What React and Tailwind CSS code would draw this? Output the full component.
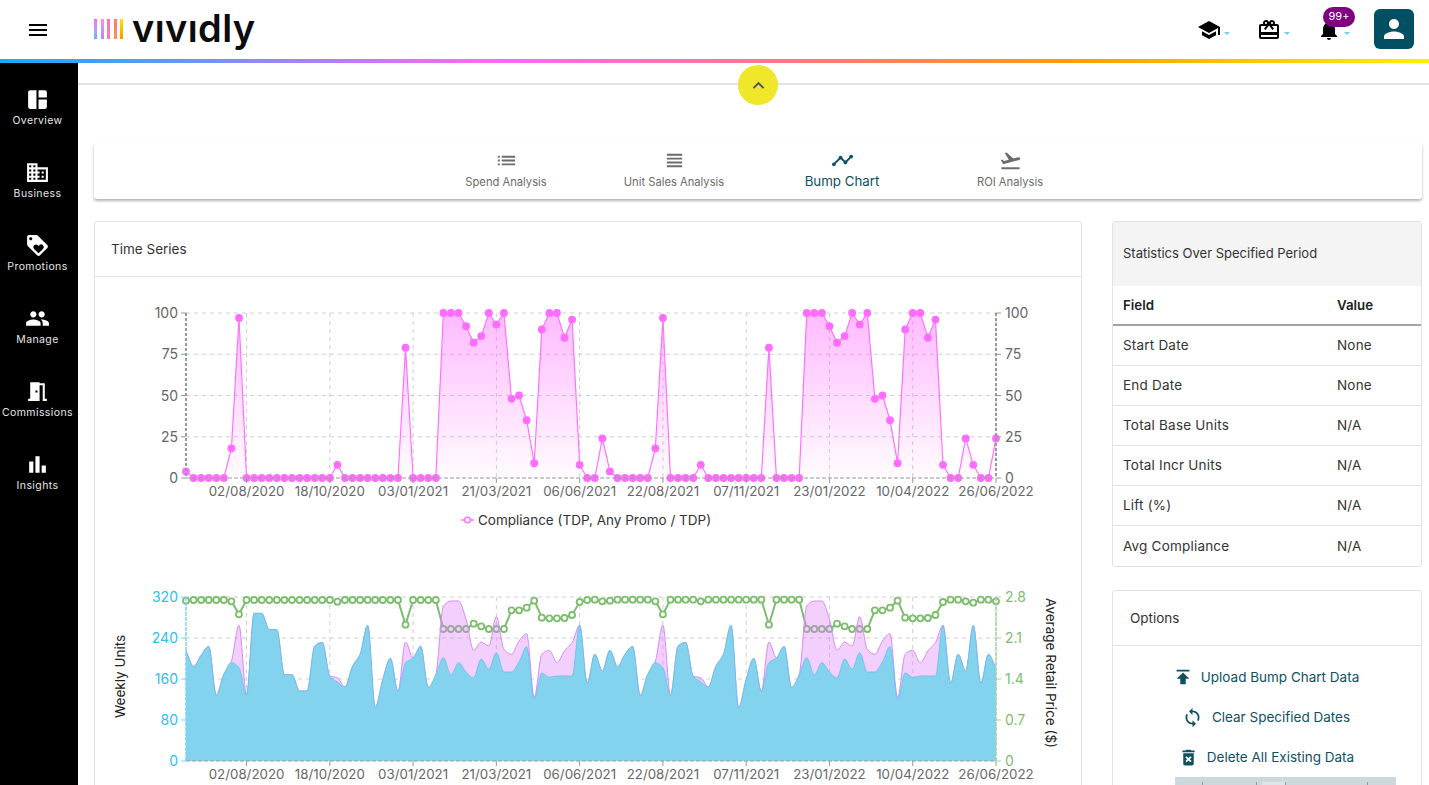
import {
  MdMenu, MdSpaceDashboard, MdDomain, MdLoyalty, MdPeople, MdMeetingRoom, MdBarChart,
  MdSchool, MdCardGiftcard, MdNotifications, MdPerson, MdKeyboardArrowUp,
  MdList, MdViewHeadline, MdTimeline, MdFlightTakeoff,
  MdPublish, MdSync, MdDeleteForever,
} from 'react-icons/md'

const NAV = [
  { label: 'Overview', icon: MdSpaceDashboard },
  { label: 'Business', icon: MdDomain },
  { label: 'Promotions', icon: MdLoyalty },
  { label: 'Manage', icon: MdPeople },
  { label: 'Commissions', icon: MdMeetingRoom },
  { label: 'Insights', icon: MdBarChart },
]

const TABS = [
  { label: 'Spend Analysis', icon: MdList },
  { label: 'Unit Sales Analysis', icon: MdViewHeadline },
  { label: 'Bump Chart', icon: MdTimeline, active: true },
  { label: 'ROI Analysis', icon: MdFlightTakeoff },
]

const STATS = [
  ['Start Date', 'None'],
  ['End Date', 'None'],
  ['Total Base Units', 'N/A'],
  ['Total Incr Units', 'N/A'],
  ['Lift (%)', 'N/A'],
  ['Avg Compliance', 'N/A'],
]

const DATES = ['02/08/2020', '18/10/2020', '03/01/2021', '21/03/2021', '06/06/2021', '22/08/2021', '07/11/2021', '23/01/2022', '10/04/2022', '26/06/2022']

// weekly series, read off the chart
const COMPLIANCE = [4,0,0,0,0,0,18,97,0,0,0,0,0,0,0,0,0,0,0,0,8,0,0,0,0,0,0,0,0,79,0,0,0,0,100,100,100,92,82,86,100,93,100,48,50,35,9,90,100,100,85,96,8,0,0,24,4,0,0,0,0,0,18,97,0,0,0,0,8,0,0,0,0,0,0,0,0,79,0,0,0,0,100,100,100,92,82,86,100,93,100,48,50,35,9,90,100,100,85,96,8,0,0,24,8,0,0,24]

// the three below are in crop pixels (3x) from y=585, baseline at 526
const PRICE_Y = [44,42,42,42,42,42,46,85,42,42,42,42,42,42,42,42,42,42,42,42,47,42,42,42,42,42,42,42,42,116,42,42,42,42,129,129,129,129,113,121,129,129,129,73,73,65,44,95,97,97,96,87,48,42,41,46,44,41,41,41,41,41,46,85,41,41,41,41,46,41,41,41,41,41,41,41,41,116,41,41,41,41,129,129,129,129,113,121,129,129,129,73,73,65,44,95,97,97,96,87,48,41,41,46,50,41,41,46]
const BASE_Y = [195,241,208,181,327,265,230,245,327,82,82,131,131,266,266,315,315,180,169,270,288,303,241,205,118,364,280,217,316,230,216,181,304,266,215,267,230,258,276,219,250,200,258,258,228,182,340,261,274,270,270,270,118,292,205,255,193,242,205,181,328,265,230,245,328,180,169,270,288,303,241,205,118,365,280,217,316,230,216,181,304,266,215,267,230,258,276,219,250,200,258,258,228,182,340,261,274,270,270,270,118,292,205,255,118,292,205,248]
const TOTAL_OVERRIDES = { 6:225,7:118,20:275,29:168,34:60,35:45,36:45,37:100,38:193,39:168,40:180,41:92,42:190,43:205,44:165,45:143,46:335,47:205,48:193,49:230,50:195,51:170,62:225,63:118,68:275,77:168,82:60,83:45,84:45,85:100,86:193,87:168,88:180,89:92,90:190,91:205,92:165,93:143,94:335,95:205,96:193,97:230,98:195,99:170 }
const TOTAL_Y = BASE_Y.map((v, i) => TOTAL_OVERRIDES[i] ?? v)

const X0 = 91
const X1 = 901
const xAt = (i) => X0 + (i * (X1 - X0)) / 107
const tickX = (i) => xAt(8 + i * 11)

// same shape as d3's curveMonotoneX
function monotonePath(pts) {
  const n = pts.length
  const m = new Array(n).fill(0)
  const s = []
  for (let i = 0; i < n - 1; i++) s.push((pts[i + 1][1] - pts[i][1]) / (pts[i + 1][0] - pts[i][0]))
  for (let i = 1; i < n - 1; i++) {
    m[i] = s[i - 1] * s[i] <= 0 ? 0 : (2 * s[i - 1] * s[i]) / (s[i - 1] + s[i])
  }
  m[0] = s[0]
  m[n - 1] = s[n - 2]
  let d = `M${pts[0][0]},${pts[0][1]}`
  for (let i = 0; i < n - 1; i++) {
    const h = (pts[i + 1][0] - pts[i][0]) / 3
    d += `C${pts[i][0] + h},${pts[i][1] + m[i] * h} ${pts[i + 1][0] - h},${pts[i + 1][1] - m[i + 1] * h} ${pts[i + 1][0]},${pts[i + 1][1]}`
  }
  return d
}

function Grid({ top, bottom }) {
  const rows = [0, 1, 2, 3].map((i) => top + ((bottom - top) * i) / 4)
  return (
    <g stroke="#cfcfcf" strokeDasharray="4 4" strokeWidth="1">
      {rows.map((y) => <line key={y} x1={X0} x2={X1} y1={y} y2={y} />)}
      {DATES.map((d, i) => <line key={d} x1={tickX(i)} x2={tickX(i)} y1={top} y2={bottom} />)}
    </g>
  )
}

function XAxis({ y }) {
  return (
    <g>
      <line x1={X0} x2={X1} y1={y} y2={y} stroke="#999" strokeDasharray="4 2" />
      {DATES.map((d, i) => (
        <g key={d}>
          <line x1={tickX(i)} x2={tickX(i)} y1={y} y2={y + 5} stroke="#999" />
          <text x={tickX(i)} y={y + 18} textAnchor="middle" fontSize="13.3" fill="#666">{d}</text>
        </g>
      ))}
    </g>
  )
}

function ComplianceChart() {
  const top = 16
  const bottom = 181
  const pts = COMPLIANCE.map((v, i) => [xAt(i), bottom - (v * (bottom - top)) / 100])
  const line = pts.map((p) => p.join(',')).join(' ')
  return (
    <svg width="987" height="260" className="block font-['Inter',sans-serif]">
      <defs>
        <linearGradient id="complianceFill" x1="0" y1="0" x2="0" y2="1">
          <stop offset="0%" stopColor="#ff66ff" stopOpacity="0.45" />
          <stop offset="100%" stopColor="#ff66ff" stopOpacity="0.02" />
        </linearGradient>
      </defs>
      <Grid top={top} bottom={bottom} />
      <polygon points={`${X0},${bottom} ${line} ${X1},${bottom}`} fill="url(#complianceFill)" />
      <polyline points={line} fill="none" stroke="#ff73ff" strokeWidth="1.2" />
      {pts.map((p, i) => <circle key={i} cx={p[0]} cy={p[1]} r="3.9" fill="#ff6cff" />)}
      <XAxis y={bottom} />
      <line x1={X0} x2={X0} y1={top} y2={bottom} stroke="#999" strokeWidth="2" strokeDasharray="3 2" />
      <line x1={X1} x2={X1} y1={top} y2={bottom} stroke="#999" strokeWidth="2" strokeDasharray="3 2" />
      {[100, 75, 50, 25, 0].map((v, i) => {
        const y = top + (i * (bottom - top)) / 4
        return (
          <g key={v} fontSize="14" fill="#666">
            <line x1={X0 - 5} x2={X0} y1={y} y2={y} stroke="#999" />
            <line x1={X1} x2={X1 + 5} y1={y} y2={y} stroke="#999" />
            <text x={X0 - 8} y={y + 5} textAnchor="end">{v}</text>
            <text x={X1 + 9} y={y + 5}>{v}</text>
          </g>
        )
      })}
      <line x1="366" x2="379" y1="223" y2="223" stroke="#ff73ff" strokeWidth="1.5" />
      <circle cx="372.500" cy="223" r="2.800" fill="#fff" stroke="#ff73ff" strokeWidth="1.5" />
      <text x="383" y="227.500" fontSize="13.500" fill="#333">Compliance (TDP, Any Promo / TDP)</text>
    </svg>
  )
}

function UnitsChart() {
  const top = 12
  const bottom = 176
  const toY = (v) => top + (v / 3 + 585 - 596)
  const base = BASE_Y.map((v, i) => [xAt(i), toY(v)])
  const total = TOTAL_Y.map((v, i) => [xAt(i), toY(v)])
  const price = PRICE_Y.map((v, i) => [xAt(i), toY(v)])
  const closeArea = `L${X1},${bottom}L${X0},${bottom}Z`
  return (
    <svg width="987" height="210" className="block font-['Inter',sans-serif]">
      <Grid top={top} bottom={bottom} />
      <polyline points={price.map((p) => p.join(',')).join(' ')} fill="none" stroke="#7dbd6e" strokeWidth="2" />
      {price.map((p, i) => <circle key={i} cx={p[0]} cy={p[1]} r="3" fill="#fff" stroke="#7dbd6e" strokeWidth="1.800" />)}
      <path d={monotonePath(total) + closeArea} fill="#dd80fa" fillOpacity="0.38" />
      <path d={monotonePath(total)} fill="none" stroke="#d78cf5" strokeWidth="1" />
      <path d={monotonePath(base) + closeArea} fill="#79d4ee" fillOpacity="0.92" />
      <path d={monotonePath(base)} fill="none" stroke="#62c0ea" strokeWidth="0.8" />
      <XAxis y={bottom} />
      <line x1={X0} x2={X0} y1={top} y2={bottom} stroke="#79d3f7" strokeWidth="1.500" strokeDasharray="4 1" />
      <line x1={X1} x2={X1} y1={top} y2={bottom} stroke="#a3d39a" strokeWidth="1.500" strokeDasharray="4 1" />
      {[['320', '2.8'], ['240', '2.1'], ['160', '1.4'], ['80', '0.7'], ['0', '0']].map(([l, r], i) => {
        const y = top + (i * (bottom - top)) / 4
        return (
          <g key={l} fontSize="14">
            <line x1={X0 - 5} x2={X0} y1={y} y2={y} stroke="#79d3f7" />
            <line x1={X1} x2={X1 + 5} y1={y} y2={y} stroke="#a3d39a" />
            <text x={X0 - 8} y={y + 5} textAnchor="end" fill="#2cc0f3">{l}</text>
            <text x={X1 + 9} y={y + 5} fill="#7dbd6e">{r}</text>
          </g>
        )
      })}
      <text transform="translate(30,91.500) rotate(-90)" textAnchor="middle" fontSize="13.500" fill="#222">Weekly Units</text>
      <text transform="translate(951,88) rotate(90)" textAnchor="middle" fontSize="13.500" fill="#222">Average Retail Price ($)</text>
    </svg>
  )
}

function Logo() {
  const bars = ['from-[#ff66ff] to-[#33bbff]', 'from-[#ff8fd0] to-[#a58cff]', 'from-[#ff70c0] to-[#ff7f90]', 'from-[#ff7878] to-[#ff9050]', 'from-[#ffe800] to-[#ff9000]']
  return (
    <div className="flex items-center ml-[44px] gap-[9px]" aria-label="vividly">
      <div className="flex gap-[3.500px] h-[20px] mt-[-1px]">
        {bars.map((b) => <span key={b} className={`w-[3px] h-full bg-gradient-to-b ${b}`} />)}
      </div>
      <span className="font-['Inter',sans-serif] font-semibold text-[38px] leading-none tracking-[0.4px] text-[#0c0c0c] mt-[-3px]">vıvıdly</span>
    </div>
  )
}

function HeaderIcon({ icon: Icon, children }) {
  return (
    <div className="relative flex items-center">
      <Icon size={24} className="text-black" />
      <span className="w-0 h-0 mt-[8px] ml-[3px] border-x-[3px] border-x-transparent border-t-[3px] border-t-[#6fcdf7]" />
      {children}
    </div>
  )
}

export default function App() {
  return (
    <div className="h-screen overflow-hidden flex flex-col bg-white font-['Inter',sans-serif] text-[#333]">
      <header className="h-[59px] flex-none flex items-center pl-[26px] pr-[15px]">
        <MdMenu size={24} className="text-black" />
        <Logo />
        <div className="ml-auto flex items-center gap-[27px]">
          <HeaderIcon icon={MdSchool} />
          <HeaderIcon icon={MdCardGiftcard} />
          <HeaderIcon icon={MdNotifications}>
            <span className="absolute left-[6px] top-[-11px] w-[32px] h-[20px] rounded-full bg-[#800080] text-white text-[11px] flex items-center justify-center">99+</span>
          </HeaderIcon>
          <div className="w-[40px] h-[40px] ml-[-3px] mt-[-1px] rounded-[6px] bg-[#004f63] flex items-center justify-center">
            <MdPerson size={30} className="text-white" />
          </div>
        </div>
      </header>
      <div className="h-[4px] flex-none bg-[linear-gradient(to_right,#0fb0f5_0%,#ff66ff_34%,#ff7a70_59%,#ffa000_76%,#fff000_100%)]" />

      <div className="flex-1 min-h-0 flex">
        <nav className="w-[78px] flex-none bg-black flex flex-col items-center pt-[24px] pr-[3px] gap-[31px]">
          {NAV.map(({ label, icon: Icon }) => (
            <div key={label} className="h-[42px] flex flex-col items-center text-[#e6e6e6]">
              <Icon size={25} className="text-white" />
              <span className="text-[10.500px] leading-[14px] tracking-[0.4px] mt-[2px]">{label}</span>
            </div>
          ))}
        </nav>

        <main className="flex-1 min-w-0 relative pl-[16px] pr-[7px]">
          <div className="absolute left-0 right-0 top-[20px] h-[2px] bg-[#e3e3e3]" />
          <button className="absolute left-[660px] top-[2px] w-[40px] h-[40px] rounded-full bg-[#f0e62a] flex items-center justify-center">
            <MdKeyboardArrowUp size={23} className="text-[#475569]" />
          </button>

          <div className="mt-[80px] h-[56px] flex justify-center bg-white rounded-[3px] shadow-[0_2px_3px_rgba(0,0,0,0.3)]">
            {TABS.map(({ label, icon: Icon, active }) => (
              <div key={label} className={`w-[168px] flex flex-col items-center pt-[6px] ${active ? 'text-[#0f5063]' : 'text-[#6b6b6b]'}`}>
                <Icon size={23} />
                <span className={`leading-[14px] ${active ? 'text-[13.300px] mt-[2px]' : 'text-[11.200px] mt-[3px]'}`}>{label}</span>
              </div>
            ))}
          </div>

          <div className="mt-[22px] flex gap-[30px] items-start">
            <section className="w-[988px] flex-none border border-[#e3e3e3] rounded-[3px]">
              <div className="h-[55px] flex items-center pl-[16px] border-b border-[#e3e3e3] text-[13.500px]">Time Series</div>
              <div className="pt-[20px]"><ComplianceChart /></div>
              <div className="pt-[28px]"><UnitsChart /></div>
            </section>

            <div className="flex-1 min-w-0 flex flex-col gap-[23px]">
              <section className="border border-[#e3e3e3] rounded-[3px] text-[13.500px] tracking-[0.2px]">
                <div className="h-[64px] flex items-center pl-[10px] bg-[#f4f4f4] text-[13px] tracking-normal">Statistics Over Specified Period</div>
                <div className="h-[40px] flex items-center pl-[10px] pt-[1px] border-b-2 border-[#a3a3a3] font-semibold text-[13.300px] tracking-normal text-[#222]">
                  <span className="w-[214px]">Field</span>
                  <span>Value</span>
                </div>
                {STATS.map(([field, value]) => (
                  <div key={field} className="h-[40px] flex items-center pl-[10px] border-b border-[#e3e3e3] last:border-b-0">
                    <span className="w-[214px]">{field}</span>
                    <span>{value}</span>
                  </div>
                ))}
              </section>

              <section className="border border-[#e3e3e3] rounded-[3px] text-[13.500px]">
                <div className="h-[55px] flex items-center pl-[17px] pt-[1px] border-b border-[#e3e3e3]">Options</div>
                <div className="flex flex-col items-center pt-[11px] text-[#0f5063]">
                  <div className="h-[40px] flex items-center gap-[7px] ml-[-3px]"><MdPublish size={22} />Upload Bump Chart Data</div>
                  <div className="h-[40px] flex items-center gap-[9px] ml-[-2px]"><MdSync size={21} />Clear Specified Dates</div>
                  <div className="h-[40px] flex items-center gap-[8px] ml-[-2px]"><MdDeleteForever size={21} />Delete All Existing Data</div>
                  <div className="w-[221px] h-[30px] bg-[#ccd7de] ml-[36px] flex pt-[5px] pl-[27px]">
                    <span className="w-[55px] border-x border-[#8d9aa3]" />
                    <span className="w-[5px]" />
                    <span className="w-[24px] bg-[#dde5ea] border-r border-[#8d9aa3]" />
                    <span className="w-[82px] border-r border-[#8d9aa3]" />
                  </div>
                </div>
              </section>
            </div>
          </div>
        </main>
      </div>
    </div>
  )
}
